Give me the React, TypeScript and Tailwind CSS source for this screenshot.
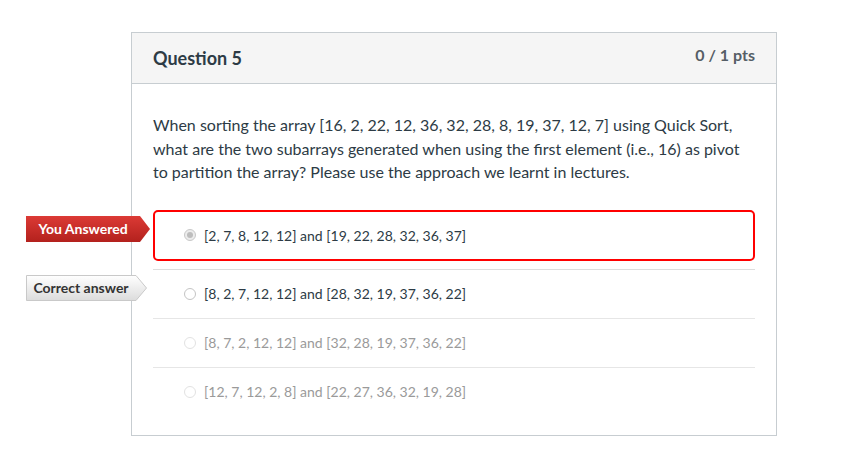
import React from "react";

function Radio({ variant }: { variant: "checked" | "normal" | "faded" }) {
  if (variant === "checked") {
    return (
      <span className="w-[12px] h-[12px] rounded-full border border-[#c8c8c8] bg-[#ececec] flex items-center justify-center shrink-0">
        <span className="w-[6px] h-[6px] rounded-full bg-[#bdbdbd]" />
      </span>
    );
  }
  if (variant === "normal") {
    return <span className="w-[12px] h-[12px] rounded-full border border-[#c4c4c4] bg-white shrink-0" />;
  }
  return <span className="w-[12px] h-[12px] rounded-full border border-[#e2e2e2] bg-white shrink-0" />;
}

function Label({ text, kind, top }: { text: string; kind: "red" | "gray"; top: string }) {
  const red = kind === "red";
  return (
    <div className={`absolute left-[26px] ${top} h-[26px] ${red ? "w-[124px]" : "w-[121px]"} flex items-center`}>
      <svg className="absolute inset-0 w-full h-full" viewBox={red ? "0 0 124 26" : "0 0 121 26"} preserveAspectRatio="none">
        <defs>
          <linearGradient id="gr" x1="0" y1="0" x2="0" y2="1">
            <stop offset="0" stopColor="#dc3a35" />
            <stop offset="1" stopColor="#b3211d" />
          </linearGradient>
          <linearGradient id="gg" x1="0" y1="0" x2="0" y2="1">
            <stop offset="0" stopColor="#ffffff" />
            <stop offset="1" stopColor="#dcdcdc" />
          </linearGradient>
        </defs>
        {red ? (
          <polygon points="0,0 114,0 124,13 114,26 0,26" fill="url(#gr)" />
        ) : (
          <polygon points="0.5,0.5 110,0.5 120.5,13 110,25.5 0.5,25.5" fill="url(#gg)" stroke="#c9c9c9" strokeWidth="1" />
        )}
      </svg>
      <span
        className={`relative ${red ? "w-[114px]" : "w-[110px]"} text-center text-[14px] font-bold leading-none ${red ? "text-white" : "text-[#333333]"}`}
      >
        {text}
      </span>
    </div>
  );
}

export default function App() {
  const font = { fontFamily: "Lato, 'Open Sans', sans-serif" };
  return (
    <div className="w-[848px] h-[467px] bg-white relative" style={font}>
      <div className="pt-[32px] pl-[131px]">
        <div className="w-[646px] h-[404px] border border-[#c7cdd1] text-[#2d3b45] bg-white">
          <div className="h-[51px] bg-[#f5f5f5] border-b border-[#c7cdd1] flex items-start justify-between px-[21px]">
            <div className="text-[18px] font-bold mt-[13px] leading-[24px]">Question 5</div>
            <div className="text-[16px] font-bold text-[#555e66] mt-[11px] leading-[22px]">0 / 1 pts</div>
          </div>
          <div className="px-[21px] pt-[29px]">
            <p className="text-[16px] leading-[23.5px]">
              When sorting the array [16, 2, 22, 12, 36, 32, 28, 8, 19, 37, 12, 7] using Quick Sort,
              <br />
              what are the two subarrays generated when using the first element (i.e., 16) as pivot
              <br />
              to partition the array? Please use the approach we learnt in lectures.
            </p>
            <div className="mt-[26px]">
              <div className="h-[51px] border-2 border-[#ff0000] rounded-[5px] flex items-center gap-[8px] pl-[29px]">
                <Radio variant="checked" />
                <span className="text-[14px]">[2, 7, 8, 12, 12] and [19, 22, 28, 32, 36, 37]</span>
              </div>
              <div className="mt-[8px] border-t border-[#dddddd] h-[49px] flex items-center gap-[8px] pl-[31px]">
                <Radio variant="normal" />
                <span className="text-[14px]">[8, 2, 7, 12, 12] and [28, 32, 19, 37, 36, 22]</span>
              </div>
              <div className="border-t border-[#e6e6e6] h-[49px] flex items-center gap-[8px] pl-[31px]">
                <Radio variant="faded" />
                <span className="text-[14px] text-[#9a9a9a]">[8, 7, 2, 12, 12] and [32, 28, 19, 37, 36, 22]</span>
              </div>
              <div className="border-t border-[#e6e6e6] h-[49px] flex items-center gap-[8px] pl-[31px]">
                <Radio variant="faded" />
                <span className="text-[14px] text-[#9a9a9a]">[12, 7, 12, 2, 8] and [22, 27, 36, 32, 19, 28]</span>
              </div>
            </div>
          </div>
        </div>
      </div>
      <Label text="You Answered" kind="red" top="top-[216px]" />
      <Label text="Correct answer" kind="gray" top="top-[275px]" />
    </div>
  );
}
